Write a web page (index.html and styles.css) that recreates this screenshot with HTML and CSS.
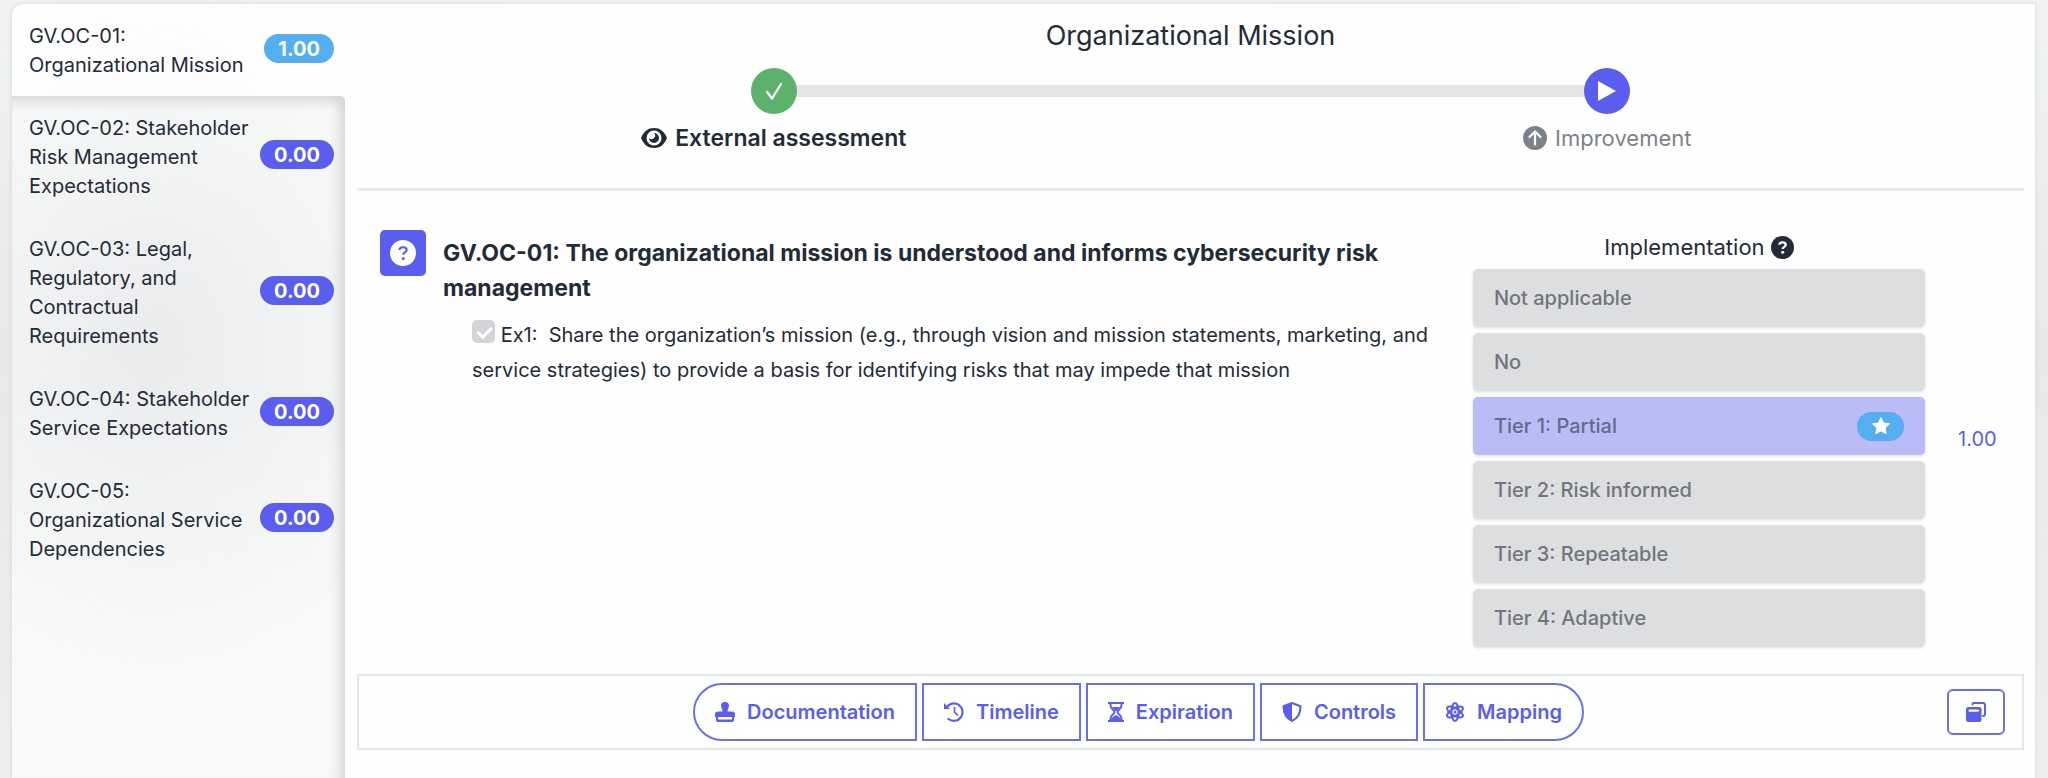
FILE: index.html
```html
<!doctype html>
<html lang="en">
<head>
<meta charset="UTF-8">
<meta name="viewport" content="width=device-width, initial-scale=1">
<title>Organizational Mission</title>
<link rel="stylesheet" href="styles.css">
</head>

<body>
    <div class="card">

        <nav class="sidebar">
            <a href="#oc1" class="item active"><span class="itemName">GV.OC-01: Organizational Mission</span><span class="badge badgeDone">1.00</span></a>
            <div class="itemList">
                <a href="#oc2" class="item"><span class="itemName">GV.OC-02: Stakeholder Risk Management Expectations</span><span class="badge">0.00</span></a>
                <a href="#oc3" class="item"><span class="itemName">GV.OC-03: Legal, Regulatory, and Contractual Requirements</span><span class="badge">0.00</span></a>
                <a href="#oc4" class="item"><span class="itemName">GV.OC-04: Stakeholder Service Expectations</span><span class="badge">0.00</span></a>
                <a href="#oc5" class="item"><span class="itemName">GV.OC-05: Organizational Service Dependencies</span><span class="badge">0.00</span></a>
            </div>
        </nav>

        <main class="content">
            <header class="top">
                <h1>Organizational Mission</h1>
                <ol class="steps">
                    <li class="step current">
                        <span class="dot dotDone">
                            <svg width="20" height="20" viewBox="0 0 20 20"><path d="M3 11l5 6.500L17 3" fill="none" stroke="#fff" stroke-width="2.300" stroke-linecap="round" stroke-linejoin="round"/></svg>
                        </span>
                        <span class="stepName">
                            <svg width="26" height="26" viewBox="0 0 26 26"><path d="M0 13C3 6 7 3 13 3s10 3 13 10c-3 7-7 10-13 10S3 20 0 13z" fill="currentColor"/><circle cx="13" cy="13" r="7.5" fill="#fff"/><path d="M13 8a5 5 0 1 1-5 5 3.500 3.500 0 0 0 5-5z" fill="currentColor"/></svg>
                            External assessment
                        </span>
                    </li>
                    <li class="step">
                        <span class="dot">
                            <svg width="20" height="20" viewBox="0 0 20 20"><path d="M1 0l18 10L1 20z" fill="#fff"/></svg>
                        </span>
                        <span class="stepName">
                            <svg width="24" height="24" viewBox="0 0 24 24"><circle cx="12" cy="12" r="12" fill="currentColor"/><path d="M12 18.500V6M6.500 11L12 5.500l5.500 5.500" fill="none" stroke="#fff" stroke-width="2.200" stroke-linecap="round" stroke-linejoin="round"/></svg>
                            Improvement
                        </span>
                    </li>
                </ol>
            </header>

            <section class="question">
                <button type="button" class="helpButton" aria-label="Help">
                    <svg width="26" height="26" viewBox="0 0 24 24"><circle cx="12" cy="12" r="12" fill="#fff"/><path d="M8.700 9.200C8.700 7.500 10 6.700 12 6.700s3.400.9 3.400 2.500c0 2.200-3.200 2.200-3.200 4.400" fill="none" stroke="#595eee" stroke-width="2"/><circle cx="12.200" cy="17" r="1.400" fill="#595eee"/></svg>
                </button>
                <div class="requirement">
                    <h2>GV.OC-01: The organizational mission is understood and informs cybersecurity risk management</h2>
                    <div class="example">
                        <input type="checkbox" id="ex1" checked disabled>
                        <label for="ex1">Ex1:&nbsp; Share the organization’s mission (e.g., through vision and mission statements, marketing, and service strategies) to provide a basis for identifying risks that may impede that mission</label>
                    </div>
                </div>
                <fieldset class="answers">
                    <legend>Implementation
                        <svg width="23" height="23" viewBox="0 0 24 24"><circle cx="12" cy="12" r="12" fill="currentColor"/><path d="M8.700 9.200C8.700 7.500 10 6.700 12 6.700s3.400.9 3.400 2.500c0 2.200-3.200 2.200-3.200 4.400" fill="none" stroke="#fff" stroke-width="2.400"/><circle cx="12.200" cy="17" r="1.600" fill="#fff"/></svg>
                    </legend>
                    <label class="answer"><input type="radio" name="tier" disabled>Not applicable</label>
                    <label class="answer"><input type="radio" name="tier" disabled>No</label>
                    <label class="answer selected"><input type="radio" name="tier" checked disabled>Tier 1: Partial
                        <span class="star"><svg width="18" height="18" viewBox="0 0 24 24"><path d="M12 1l3.300 7.100 7.700.9-5.700 5.300 1.500 7.700-6.800-3.800L5.200 22l1.500-7.700L1 9l7.700-.9z" fill="#fff" stroke="#fff" stroke-width="1.500" stroke-linejoin="round"/></svg></span>
                    </label>
                    <label class="answer"><input type="radio" name="tier" disabled>Tier 2: Risk informed</label>
                    <label class="answer"><input type="radio" name="tier" disabled>Tier 3: Repeatable</label>
                    <label class="answer"><input type="radio" name="tier" disabled>Tier 4: Adaptive</label>
                </fieldset>
                <output class="score">1.00</output>
            </section>

            <div class="toolbar">
                <div class="tools">
                    <button type="button">
                        <svg width="20" height="20" viewBox="0 0 20 20"><path d="M10 0a4 4 0 0 1 4 4c0 2-1.500 3-1.500 5.500H17a3 3 0 0 1 3 3V15H0v-2.500a3 3 0 0 1 3-3h4.500C7.500 7 6 6 6 4a4 4 0 0 1 4-4z" fill="currentColor"/><path d="M2 15v3a1 1 0 0 0 1 1h14a1 1 0 0 0 1-1v-3" fill="none" stroke="currentColor" stroke-width="2"/><path d="M2 17.500h16v1.500H2z" fill="currentColor"/></svg>
                        Documentation
                    </button>
                    <button type="button">
                        <svg width="20" height="20" viewBox="0 0 20 20"><path d="M2.500 5.500a8.700 8.700 0 1 1 2 11.500" fill="none" stroke="currentColor" stroke-width="2.200" stroke-linecap="round"/><path d="M0 1l1.500 1.500L6 7H0z" fill="currentColor"/><path d="M10.500 5.500V10l3 3" fill="none" stroke="currentColor" stroke-width="1.700" stroke-linecap="round"/></svg>
                        Timeline
                    </button>
                    <button type="button">
                        <svg width="16" height="20" viewBox="0 0 16 20"><path d="M0 1h16M0 19h16" stroke="currentColor" stroke-width="2.200"/><path d="M2.500 1v2.500c0 3 4 4.500 4 6.500s-4 3.500-4 6.500V19M13.500 1v2.500c0 3-4 4.500-4 6.500s4 3.500 4 6.500V19" fill="none" stroke="currentColor" stroke-width="2"/><path d="M4 5h8l-4 4.500zM3 18c0-2 3-4 5-5 2 1 5 3 5 5z" fill="currentColor"/></svg>
                        Expiration
                    </button>
                    <button type="button">
                        <svg width="20" height="20" viewBox="0 0 20 20"><path d="M10 1l8.500 3.300c0 6.500-2.500 12-8.500 14.700C4 16.300 1.500 10.800 1.500 4.300z" fill="none" stroke="currentColor" stroke-width="2" stroke-linejoin="round"/><path d="M10 1v18C4 16.300 1.500 10.800 1.500 4.300z" fill="currentColor"/></svg>
                        Controls
                    </button>
                    <button type="button">
                        <svg width="20" height="20" viewBox="0 0 20 20"><g fill="none" stroke="currentColor" stroke-width="2"><ellipse cx="10" cy="10" rx="3.600" ry="9"/><ellipse cx="10" cy="10" rx="3.600" ry="9" transform="rotate(60 10 10)"/><ellipse cx="10" cy="10" rx="3.600" ry="9" transform="rotate(120 10 10)"/></g><circle cx="10" cy="10" r="1.500" fill="currentColor"/></svg>
                        Mapping
                    </button>
                </div>
                <button type="button" class="copyButton" aria-label="Show all">
                    <svg width="20" height="20" viewBox="0 0 20 20"><path d="M6.500 2.500V2a1 1 0 0 1 1-1H17a2 2 0 0 1 2 2v9a2 2 0 0 1-2 2" fill="none" stroke="currentColor" stroke-width="2" stroke-linecap="round"/><rect y="5" width="15.500" height="15" rx="2.500" fill="currentColor"/><rect x="2.500" y="7.500" width="10.500" height="2.300" rx="1" fill="#fff"/></svg>
                </button>
            </div>
        </main>

    </div>
</body>
</html>
```
FILE: styles.css
```css
* {
    box-sizing: border-box;
}

body {
    margin: 0;
    padding: 4px 13px 0px 12px;
    background: linear-gradient(#f1f3f3, #e7e8e8 45%, #edefee);
    color: #232b39;
    font-family: Inter, "Liberation Sans", sans-serif;
    font-size: 20px;
}

button {
    font: inherit;
    cursor: pointer;
}

svg {
    display: block;
    flex: none;
}

.card {
    display: flex;
    min-height: calc(100vh - 4px);
    background-color: #fefefe;
    border-radius: 12px 0px 0px 0px;
    box-shadow: 0px 0px 3px 1px #dcdfdf;
}

/* left menu */

.sidebar {
    display: flex;
    flex-direction: column;
    flex: none;
    width: 333px;
}

.itemList {
    flex: 1;
    border-top-right-radius: 5px;
    background: radial-gradient(ellipse 290px 320px at 140px 250px, #eaebed, #f2f3f3 55%, #f8faf9);
    box-shadow: inset -8px 8px 14px -4px #cfd1d5;
}

.item {
    display: flex;
    align-items: center;
    justify-content: space-between;
    padding: 18px 11px 16px 17px;
    color: inherit;
    line-height: 29px;
    text-decoration: none;
}

.active {
    border-radius: 12px 0px 0px 0px;
    background: radial-gradient(circle at 140px 140px, #fafafb, #fefefe 170px);
}

.badge {
    flex: none;
    margin-bottom: 6px;
    padding: 1px 14px 0px;
    border-radius: 15px;
    background-color: #595eee;
    color: #fff;
    font-weight: 700;
    line-height: 28px;
}

.badgeDone {
    background-color: #54aeef;
}

/* title and steps */

.content {
    flex: 1;
    min-width: 0;
    padding: 0px 11px 26px 12px;
}

.top {
    height: 187px;
    border-bottom: 3px solid #e9eaea;
}

h1 {
    margin: 0;
    padding-top: 12px;
    font-size: 27px;
    font-weight: 400;
    line-height: 40px;
    text-align: center;
}

.steps {
    display: flex;
    margin: 0;
    padding: 12px 0px 0px;
    list-style: none;
}

.step {
    display: flex;
    flex: 1;
    flex-direction: column;
    align-items: center;
    position: relative;
    color: #7c828a;
    font-size: 22px;
}

.current {
    color: #232b39;
    font-size: 23px;
    font-weight: 600;
}

/* bar that joins this step to the next one */
.current::before {
    content: "";
    position: absolute;
    left: 50%;
    top: 17px;
    width: 100%;
    height: 12px;
    background-color: #e4e6e5;
}

.dot {
    display: flex;
    align-items: center;
    justify-content: center;
    width: 46px;
    height: 46px;
    border-radius: 50%;
    background-color: #595eee;
    z-index: 1;
}

.dotDone {
    background-color: #5cb16b;
}

.stepName {
    display: flex;
    align-items: center;
    gap: 8px;
    margin-top: 8px;
    line-height: 32px;
}

/* question */

.question {
    display: flex;
    padding: 39px 0px 27px 23px;
}

.helpButton {
    display: flex;
    align-items: center;
    justify-content: center;
    flex: none;
    width: 46px;
    height: 46px;
    padding: 0;
    border: none;
    border-radius: 5px;
    background-color: #595eee;
}

.requirement {
    flex: 1;
    padding: 6px 34px 0px 17px;
}

h2 {
    margin: 0;
    font-size: 23px;
    font-weight: 700;
    line-height: 35px;
}

.example {
    padding: 12px 0px 0px 29px;
    line-height: 35px;
}

.example input {
    appearance: none;
    display: inline-block;
    position: relative;
    width: 23px;
    height: 23px;
    margin: 0;
    border-radius: 5px;
    background-color: #d3d4d8;
    vertical-align: -1px;
}

.example input::after {
    content: "";
    position: absolute;
    left: 8px;
    top: 4px;
    width: 6px;
    height: 11px;
    border: solid #fff;
    border-width: 0px 3px 3px 0px;
    transform: rotate(45deg);
}

.answers {
    display: flex;
    flex-direction: column;
    flex: none;
    gap: 6px;
    width: 27.5%;
    min-width: 0;
    margin: 0;
    padding: 0;
    border: none;
}

legend {
    display: flex;
    align-items: center;
    justify-content: center;
    gap: 6px;
    width: 100%;
    padding: 0px 0px 5px;
    font-size: 22px;
    line-height: 34px;
}

.answer {
    display: flex;
    align-items: center;
    justify-content: space-between;
    height: 58px;
    padding: 0px 21px;
    border-radius: 5px;
    background-color: #dddee0;
    box-shadow: 0px 1px 3px #dcdddf;
    color: #70757e;
    font-weight: 500;
}

.answer input {
    appearance: none;
    position: absolute;
    margin: 0;
}

.selected {
    background-color: #babcf6;
    color: #646a8c;
}

.star {
    display: flex;
    align-items: center;
    justify-content: center;
    width: 47px;
    height: 29px;
    border-radius: 15px;
    background-color: #54aeef;
}

.score {
    align-self: center;
    width: 99px;
    padding-left: 33px;
    color: #595eee;
}

/* bottom buttons */

.toolbar {
    display: flex;
    align-items: center;
    padding: 7px 17px;
    border: 2px solid #e6e7eb;
}

.tools {
    display: flex;
    flex: 1;
    justify-content: center;
    gap: 5px;
    margin-right: 46px;
}

.toolbar button {
    display: flex;
    align-items: center;
    justify-content: center;
    gap: 12px;
    height: 58px;
    padding: 0px 20px;
    border: 2px solid #6c70f0;
    background-color: #fff;
    color: #595eee;
    font-weight: 600;
}

.tools button:first-child {
    border-radius: 29px 0px 0px 29px;
}

.tools button:last-child {
    border-radius: 0px 29px 29px 0px;
}

.toolbar .copyButton {
    width: 58px;
    height: 46px;
    padding: 0;
    border-radius: 6px;
}
```
